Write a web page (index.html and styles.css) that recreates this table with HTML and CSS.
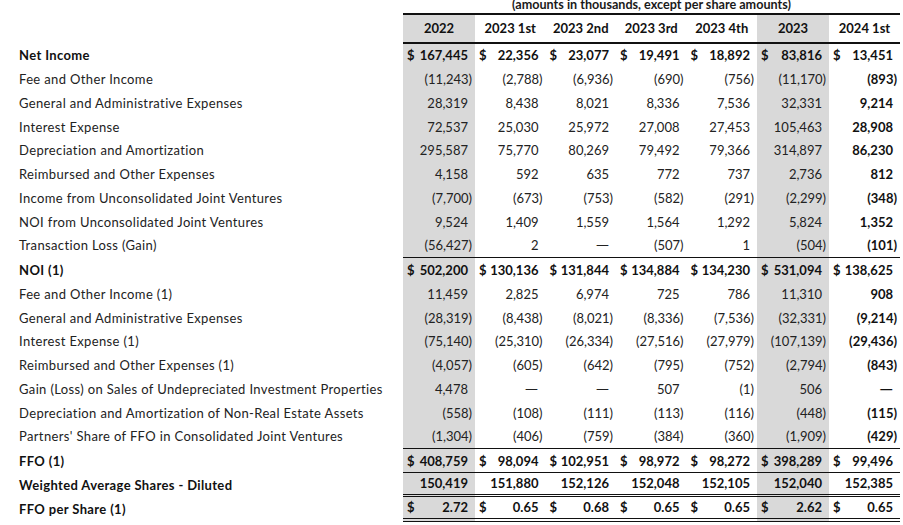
FILE: index.html
```html
<!DOCTYPE html>
<html>
<head>
<meta charset="utf-8">
<link rel="stylesheet" href="styles.css">
</head>
<body>
<div class="page">
  <div class="caption">(amounts in thousands, except per share amounts)</div>
  <table class="fin">
    <colgroup>
      <col class="c-label"><col class="c-wide"><col class="c-q"><col class="c-q"><col class="c-q"><col class="c-q"><col class="c-wide"><col class="c-last">
    </colgroup>
    <thead>
      <tr>
        <th class="lbl"></th><th class="g">2022</th><th>2023 1st</th><th>2023 2nd</th><th>2023 3rd</th><th>2023 4th</th><th class="g">2023</th><th>2024 1st</th>
      </tr>
    </thead>
    <tbody>
      <tr class="b">
        <td class="lbl">Net Income</td>
        <td class="g"><div class="d"><span>$</span><span>167,445</span></div></td>
        <td><div class="d"><span>$</span><span>22,356</span></div></td>
        <td><div class="d"><span>$</span><span>23,077</span></div></td>
        <td><div class="d"><span>$</span><span>19,491</span></div></td>
        <td><div class="d"><span>$</span><span>18,892</span></div></td>
        <td class="g"><div class="d"><span>$</span><span>83,816</span></div></td>
        <td><div class="d"><span>$</span><span>13,451</span></div></td>
      </tr>
      <tr>
        <td class="lbl">Fee and Other Income</td>
        <td class="g ng">(11,243)</td><td class="ng">(2,788)</td><td class="ng">(6,936)</td><td class="ng">(690)</td><td class="ng">(756)</td><td class="g ng">(11,170)</td><td class="ng">(893)</td>
      </tr>
      <tr>
        <td class="lbl">General and Administrative Expenses</td>
        <td class="g">28,319</td><td>8,438</td><td>8,021</td><td>8,336</td><td>7,536</td><td class="g">32,331</td><td>9,214</td>
      </tr>
      <tr>
        <td class="lbl">Interest Expense</td>
        <td class="g">72,537</td><td>25,030</td><td>25,972</td><td>27,008</td><td>27,453</td><td class="g">105,463</td><td>28,908</td>
      </tr>
      <tr>
        <td class="lbl">Depreciation and Amortization</td>
        <td class="g">295,587</td><td>75,770</td><td>80,269</td><td>79,492</td><td>79,366</td><td class="g">314,897</td><td>86,230</td>
      </tr>
      <tr>
        <td class="lbl">Reimbursed and Other Expenses</td>
        <td class="g">4,158</td><td>592</td><td>635</td><td>772</td><td>737</td><td class="g">2,736</td><td>812</td>
      </tr>
      <tr>
        <td class="lbl">Income from Unconsolidated Joint Ventures</td>
        <td class="g ng">(7,700)</td><td class="ng">(673)</td><td class="ng">(753)</td><td class="ng">(582)</td><td class="ng">(291)</td><td class="g ng">(2,299)</td><td class="ng">(348)</td>
      </tr>
      <tr>
        <td class="lbl">NOI from Unconsolidated Joint Ventures</td>
        <td class="g">9,524</td><td>1,409</td><td>1,559</td><td>1,564</td><td>1,292</td><td class="g">5,824</td><td>1,352</td>
      </tr>
      <tr>
        <td class="lbl">Transaction Loss (Gain)</td>
        <td class="g ng">(56,427)</td><td>2</td><td><span class="dash">—</span></td><td class="ng">(507)</td><td>1</td><td class="g ng">(504)</td><td class="ng">(101)</td>
      </tr>
      <tr class="b top1">
        <td class="lbl">NOI (1)</td>
        <td class="g"><div class="d"><span>$</span><span>502,200</span></div></td>
        <td><div class="d"><span>$</span><span>130,136</span></div></td>
        <td><div class="d"><span>$</span><span>131,844</span></div></td>
        <td><div class="d"><span>$</span><span>134,884</span></div></td>
        <td><div class="d"><span>$</span><span>134,230</span></div></td>
        <td class="g"><div class="d"><span>$</span><span>531,094</span></div></td>
        <td><div class="d"><span>$</span><span>138,625</span></div></td>
      </tr>
      <tr>
        <td class="lbl">Fee and Other Income (1)</td>
        <td class="g">11,459</td><td>2,825</td><td>6,974</td><td>725</td><td>786</td><td class="g">11,310</td><td>908</td>
      </tr>
      <tr>
        <td class="lbl">General and Administrative Expenses</td>
        <td class="g ng">(28,319)</td><td class="ng">(8,438)</td><td class="ng">(8,021)</td><td class="ng">(8,336)</td><td class="ng">(7,536)</td><td class="g ng">(32,331)</td><td class="ng">(9,214)</td>
      </tr>
      <tr>
        <td class="lbl">Interest Expense (1)</td>
        <td class="g ng">(75,140)</td><td class="ng">(25,310)</td><td class="ng">(26,334)</td><td class="ng">(27,516)</td><td class="ng">(27,979)</td><td class="g ng">(107,139)</td><td class="ng">(29,436)</td>
      </tr>
      <tr>
        <td class="lbl">Reimbursed and Other Expenses (1)</td>
        <td class="g ng">(4,057)</td><td class="ng">(605)</td><td class="ng">(642)</td><td class="ng">(795)</td><td class="ng">(752)</td><td class="g ng">(2,794)</td><td class="ng">(843)</td>
      </tr>
      <tr>
        <td class="lbl">Gain (Loss) on Sales of Undepreciated Investment Properties</td>
        <td class="g">4,478</td><td><span class="dash">—</span></td><td><span class="dash">—</span></td><td>507</td><td class="ng">(1)</td><td class="g">506</td><td><span class="dash">—</span></td>
      </tr>
      <tr>
        <td class="lbl">Depreciation and Amortization of Non-Real Estate Assets</td>
        <td class="g ng">(558)</td><td class="ng">(108)</td><td class="ng">(111)</td><td class="ng">(113)</td><td class="ng">(116)</td><td class="g ng">(448)</td><td class="ng">(115)</td>
      </tr>
      <tr>
        <td class="lbl">Partners' Share of FFO in Consolidated Joint Ventures</td>
        <td class="g ng">(1,304)</td><td class="ng">(406)</td><td class="ng">(759)</td><td class="ng">(384)</td><td class="ng">(360)</td><td class="g ng">(1,909)</td><td class="ng">(429)</td>
      </tr>
      <tr class="b top1 ffo">
        <td class="lbl">FFO (1)</td>
        <td class="g"><div class="d"><span>$</span><span>408,759</span></div></td>
        <td><div class="d"><span>$</span><span>98,094</span></div></td>
        <td><div class="d"><span>$</span><span>102,951</span></div></td>
        <td><div class="d"><span>$</span><span>98,972</span></div></td>
        <td><div class="d"><span>$</span><span>98,272</span></div></td>
        <td class="g"><div class="d"><span>$</span><span>398,289</span></div></td>
        <td><div class="d"><span>$</span><span>99,496</span></div></td>
      </tr>
      <tr class="b shares">
        <td class="lbl">Weighted Average Shares - Diluted</td>
        <td class="g">150,419</td><td>151,880</td><td>152,126</td><td>152,048</td><td>152,105</td><td class="g">152,040</td><td>152,385</td>
      </tr>
      <tr class="b pershare">
        <td class="lbl">FFO per Share (1)</td>
        <td class="g"><div class="d"><span>$</span><span>2.72</span></div></td>
        <td><div class="d"><span>$</span><span>0.65</span></div></td>
        <td><div class="d"><span>$</span><span>0.68</span></div></td>
        <td><div class="d"><span>$</span><span>0.65</span></div></td>
        <td><div class="d"><span>$</span><span>0.65</span></div></td>
        <td class="g"><div class="d"><span>$</span><span>2.62</span></div></td>
        <td><div class="d"><span>$</span><span>0.65</span></div></td>
      </tr>
    </tbody>
  </table>
</div>
</body>
</html>
```
FILE: styles.css
```css
html, body {
  margin: 0;
  padding: 0;
  background: #fff;
}

body {
  font-family: Lato, "Noto Sans", "Liberation Sans", sans-serif;
  font-size: 13px;
  color: #222;
  overflow: hidden;
}

.page {
  padding-left: 8px;
}

.caption {
  margin: -4px 0 0 395px;
  width: 497px;
  height: 17px;
  line-height: 17px;
  font-size: 12.6px;
  font-weight: 700;
  text-align: center;
  color: #1a1a1a;
  white-space: nowrap;
}

.fin {
  border-collapse: separate;
  border-spacing: 0;
  table-layout: fixed;
  width: 892px;
}

.c-label { width: 395px; }
.c-wide { width: 72px; }
.c-q { width: 70.5px; }
.c-last { width: 71px; }

.fin th {
  height: 30.5px;
  padding: 0 0 1px;
  font-weight: 700;
  text-align: center;
  color: #111;
  border-top: 2px solid #111;
  border-bottom: 2px solid #111;
  box-sizing: border-box;
}

.fin th.lbl {
  border: none;
}

.fin td {
  height: 23.75px;
  padding: 0 7px 0 4px;
  text-align: right;
  white-space: nowrap;
  vertical-align: middle;
  box-sizing: border-box;
}

.fin td.ng {
  padding-right: 3px;
}

.fin td.lbl {
  text-align: left;
  padding-left: 11px;
  letter-spacing: 0.36px;
}

.fin td:last-child {
  font-weight: 700;
  color: #111;
}

.fin .g {
  background: #d9d9d9;
}

.d {
  display: flex;
  justify-content: space-between;
}

.dash {
  display: inline-block;
  transform: scaleX(1.35);
  transform-origin: right center;
}

.fin tr.b td {
  font-weight: 700;
  color: #111;
}

.fin tr.top1 td:not(.lbl) {
  border-top: 1px solid #111;
}

.fin tr.top1 td {
  height: 24.75px;
}

.fin tr.ffo td {
  height: 24.75px;
}

.fin tr.ffo td:not(.lbl) {
  border-bottom: 1.5px solid #111;
}

.fin tr.shares td {
  height: 23.75px;
}

.fin tr.shares td:not(.lbl) {
  border-bottom: 3px double #111;
}

.fin tr.pershare td {
  height: 25px;
}

.fin tr.pershare td:not(.lbl) {
  border-bottom: 4px double #111;
}
```
